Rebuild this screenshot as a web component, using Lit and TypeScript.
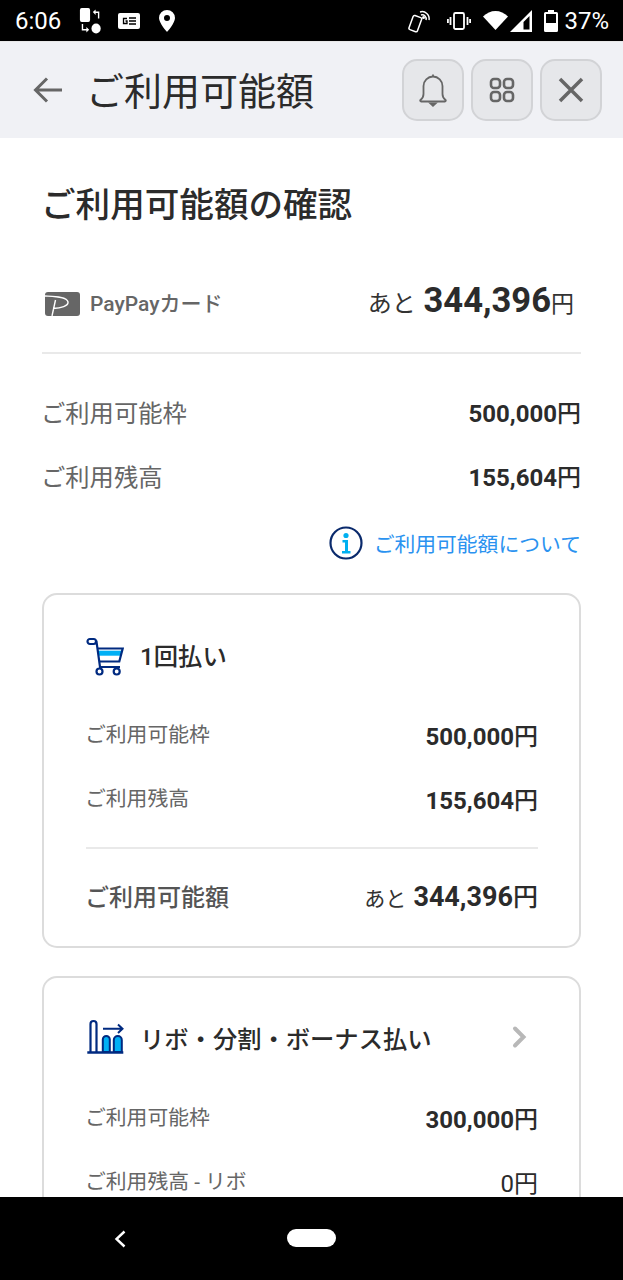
import { LitElement, html, css, svg } from 'lit';
import { customElement } from 'lit/decorators.js';

const row = (label: string, value: string) => html`
  <div class="card-row">
    <span class="card-label">${label}</span>
    <span class="card-value">${value}<span class="yen">円</span></span>
  </div>
`;

const cartIcon = svg`
  <svg class="card-icon cart" width="38" height="40" viewBox="0 0 38 40" fill="none">
    <rect x="12" y="13.700" width="24" height="5" fill="#00b0f5"/>
    <rect x="1.500" y="2" width="8.500" height="5" rx="2.400" stroke="#002a80" stroke-width="2.200"/>
    <path d="M10 4.500h.500L14 30h20" stroke="#002a80" stroke-width="2.200"/>
    <path d="M11.700 11.500h25l-3.400 13H13.500" stroke="#002a80" stroke-width="2.200"/>
    <circle cx="13.500" cy="34.500" r="3" fill="#fff" stroke="#002a80" stroke-width="2.200"/>
    <circle cx="30.700" cy="34.500" r="3" fill="#fff" stroke="#002a80" stroke-width="2.200"/>
  </svg>
`;

const chartIcon = svg`
  <svg class="card-icon" width="38" height="36" viewBox="0 0 38 36" fill="none">
    <path d="M16.800 33V20.500a3.500 3.500 0 0 1 7 0V33zM27.800 33V21a4 4 0 0 1 8 0V33z" fill="#00b0f5" stroke="#002a80" stroke-width="2"/>
    <path d="M4.500 33V5a3 3 0 0 1 6 0V33" stroke="#002a80" stroke-width="2.200"/>
    <path d="M1.300 33.500h36" stroke="#002a80" stroke-width="2.400"/>
    <path d="M17 9.700h19M32 5.500l4.500 4.200-4.500 4.300" stroke="#002a80" stroke-width="2"/>
  </svg>
`;

@customElement('app-root')
export class AppRoot extends LitElement {
  static styles = css`
    :host {
      display: flex;
      flex-direction: column;
      width: 623px;
      height: 1280px;
      overflow: hidden;
      background: #fff;
      font-family: Roboto, 'Noto Sans CJK JP', sans-serif;
      color: #2b2b2b;
    }

    .status {
      flex: none;
      height: 41px;
      background: #000;
      color: #fff;
      border-bottom: 1px solid #e8e8e8;
      display: flex;
      align-items: center;
      padding: 0 14px 0 15px;
      font-size: 24px;
      box-sizing: content-box;
    }
    .status-time { margin-right: 18px; }
    .status-left { display: flex; align-items: center; gap: 15px; }
    .pin { margin-left: 4px; }
    .status-right { margin-left: auto; display: flex; align-items: center; }
    .nfc { margin-right: 15px; }
    .vibrate { margin-right: 12px; }
    .signal { margin: 0 12px 0 2px; }
    .battery { margin-right: 6px; }

    .topbar {
      flex: none;
      height: 96px;
      background: #f0f1f5;
      display: flex;
      align-items: center;
      padding: 0 21px 0 33px;
    }
    .back { margin-right: 23px; display: block; }
    .topbar h1 {
      margin: -3px 0 0;
      font-size: 38px;
      font-weight: 400;
      color: #2b2b2b;
      flex: 1;
      white-space: nowrap;
    }
    .tool {
      width: 62px;
      height: 62px;
      box-sizing: border-box;
      border: 2px solid #d2d3d6;
      border-radius: 15px;
      background: #e6e7ea;
      margin-left: 7px;
      display: flex;
      align-items: center;
      justify-content: center;
    }

    .content {
      flex: 1;
      min-height: 0;
      overflow: hidden;
      padding: 0 42px;
    }
    h2 {
      margin: 42px 0 0 -1px;
      font-size: 34.6px;
      line-height: 50px;
      font-weight: 500;
      color: #2b2b2b;
      white-space: nowrap;
    }
    .summary {
      margin-top: 48px;
      height: 74px;
      display: flex;
      align-items: flex-start;
      border-bottom: 2px solid #e9e9e9;
    }
    .brand {
      display: flex;
      align-items: center;
      gap: 10px;
      margin: 11px 0 0 3px;
      font-size: 21px;
      line-height: 30px;
      font-weight: 500;
      color: #666;
    }
    .remain {
      margin-left: auto;
      margin-right: 7px;
      font-size: 23px;
      line-height: 36px;
      white-space: nowrap;
      color: #333;
      margin-top: 4px;
    }
    .remain .ato { font-size: 24px; }
    .remain b { font-size: 34.6px; font-weight: 700; color: #2b2b2b; margin: 0 0 0 2px; }

    .line {
      display: flex;
      justify-content: space-between;
      align-items: center;
      height: 64px;
    }
    .lines { margin-top: 25px; }
    .line-label { font-size: 24.3px; color: #666; margin-left: -1px; }
    .line-value { font-size: 24px; font-weight: 700; color: #2b2b2b; }
    .yen { font-weight: 500; }

    .about {
      display: flex;
      justify-content: flex-end;
      align-items: center;
      gap: 11px;
      margin-top: 16px;
      height: 40px;
      font-size: 20.8px;
      color: #2a92f0;
    }

    .card {
      box-sizing: border-box;
      margin-top: 30px;
      border: 2px solid #dcdcdc;
      border-radius: 15px;
      padding: 0 41px 0 42px;
      width: 539px;
    }
    .card-1 { height: 355px; }
    .card-2 { margin-top: 28px; height: 300px; }
    .card-head {
      display: flex;
      align-items: center;
      height: 44px;
      margin-top: 37px;
      gap: 16px;
      font-size: 24.3px;
      font-weight: 500;
      color: #2b2b2b;
      white-space: nowrap;
    }
    .card-icon { flex: none; display: block; }
    .cart { margin-top: 5px; }
    .chev { margin-left: auto; margin-right: 11px; display: block; }
    .card-rows { margin-top: 26px; }
    .card-row {
      display: flex;
      justify-content: space-between;
      align-items: center;
      height: 64px;
    }
    .card-label { font-size: 20.8px; color: #666; margin: -2px 0 0 -1px; }
    .card-value { font-size: 24px; font-weight: 700; color: #2b2b2b; }
    .card-value.plain { font-weight: 400; }
    .card-total {
      margin-top: 17px;
      padding-top: 13px;
      border-top: 2px solid #e9e9e9;
      display: flex;
      justify-content: space-between;
      align-items: center;
      height: 66px;
      box-sizing: content-box;
    }
    .total-label { font-size: 24px; font-weight: 500; color: #555; margin-left: -1px; }
    .total-value { font-size: 21px; color: #333; white-space: nowrap; }
    .total-value b { font-size: 27px; font-weight: 700; color: #2b2b2b; margin-left: 2px; }
    .total-value b.yen { font-size: 25px; font-weight: 500; margin-left: 0; }

    .navbar {
      flex: none;
      height: 83px;
      background: #000;
      position: relative;
      display: flex;
      align-items: center;
      justify-content: center;
    }
    .nav-back { position: absolute; left: 113px; top: 33px; }
    .pill {
      width: 49px;
      height: 18px;
      border-radius: 9px;
      background: #fff;
      margin-top: -1px;
    }
  `;

  render() {
    return html`
      <div class="status">
        <span class="status-time">6:06</span>
        <div class="status-left">
          <svg width="24" height="26" viewBox="0 0 26 26" preserveAspectRatio="none" fill="#fff">
            <rect x="1" y="0" width="11" height="14" rx="2"/>
            <circle cx="18.5" cy="20.5" r="5"/>
            <path d="M15 4l3-2.500v2h4v7h-1.500V5h-2.500v2zM3 16h1.500v5H8v-2l3 2.800-3 2.700v-2H3z"/>
          </svg>
          <svg width="22" height="16" viewBox="0 0 22 16">
            <rect width="22" height="16" rx="2" fill="#fff"/>
            <path d="M9 5.500H5.500v5H9V8H7.500" fill="none" stroke="#000" stroke-width="1.300"/>
            <path d="M11 5h7M11 8h7M11 11h7" stroke="#000" stroke-width="1.400"/>
          </svg>
          <svg class="pin" width="16" height="22" viewBox="0 0 16 22">
            <path fill-rule="evenodd" fill="#fff" d="M8 0a8 8 0 0 1 8 8c0 5-8 14-8 14S0 13 0 8a8 8 0 0 1 8-8zm0 5a3 3 0 1 0 0 6 3 3 0 0 0 0-6z"/>
          </svg>
        </div>
        <div class="status-right">
          <svg class="nfc" width="24" height="24" viewBox="0 0 24 24" fill="none" stroke="#fff" stroke-width="1.500">
            <rect x="3" y="7" width="9" height="15" rx="1.500" transform="rotate(20 7 14)"/>
            <path d="M12 3a7 7 0 0 1 9 8M13 6a4 4 0 0 1 5 5"/>
            <circle cx="15.500" cy="8.500" r="1.500" fill="#fff" stroke="none"/>
          </svg>
          <svg class="vibrate" width="24" height="20" viewBox="0 0 24 20" fill="none" stroke="#fff" stroke-width="1.800">
            <rect x="7" y="2" width="10" height="16" rx="1.500"/>
            <path d="M3.500 6v8M0.900 8v4M20.500 6v8M23.100 8v4"/>
          </svg>
          <svg width="25" height="19" viewBox="0 0 25 19" fill="#fff">
            <path d="M0 5.500C3.500 2 8 0 12.500 0S21.500 2 25 5.500L12.500 19z"/>
          </svg>
          <svg class="signal" width="22" height="22" viewBox="0 0 22 22">
            <path d="M0 22 22 0v22zM19.500 19.500V6L13.500 12V19.500z" fill="#fff" fill-rule="evenodd"/>
          </svg>
          <svg class="battery" width="14" height="22" viewBox="0 0 14 22">
            <path fill="#fff" fill-rule="evenodd" d="M4 0h6v2h2.500A1.500 1.500 0 0 1 14 3.500v17a1.500 1.500 0 0 1-1.500 1.500h-11A1.500 1.500 0 0 1 0 20.500v-17A1.500 1.500 0 0 1 1.500 2H4zM2 4v9h10V4z"/>
          </svg>
          <span>37%</span>
        </div>
      </div>

      <div class="topbar">
        <svg class="back" width="30" height="30" viewBox="0 0 30 30" fill="none" stroke="#666" stroke-width="3">
          <path d="M29 15H3M14 3.500 2.500 15 14 26.500"/>
        </svg>
        <h1>ご利用可能額</h1>
        <div class="tool">
          <svg width="28" height="34" viewBox="0 0 28 34" fill="none" stroke="#666" stroke-width="1.800">
            <path d="M1.500 27c2-1.500 3-3 3-6v-8a9.500 9.500 0 0 1 19 0v8c0 3 1 4.500 3 6 .6.600.2 1.500-.6 1.500H2.100c-.8 0-1.200-.9-.6-1.500z"/>
            <path d="M11.500 30.500h5l-2.500 2.200z" fill="#666"/>
            <path d="M14 1.500v2"/>
          </svg>
        </div>
        <div class="tool">
          <svg width="26" height="26" viewBox="0 0 26 26" fill="none" stroke="#666" stroke-width="2.600">
            <rect x="2" y="2" width="9" height="9" rx="3"/>
            <rect x="15" y="2" width="9" height="9" rx="3"/>
            <rect x="2" y="15" width="9" height="9" rx="3"/>
            <rect x="15" y="15" width="9" height="9" rx="3"/>
          </svg>
        </div>
        <div class="tool">
          <svg width="26" height="26" viewBox="0 0 26 26" fill="none" stroke="#666" stroke-width="3.500">
            <path d="M2 2l22 22M24 2 2 24"/>
          </svg>
        </div>
      </div>

      <div class="content">
        <h2>ご利用可能額の確認</h2>

        <div class="summary">
          <div class="brand">
            <svg width="35" height="24" viewBox="0 0 35 24">
              <rect width="35" height="24" rx="3" fill="#666"/>
              <path d="M0 4C9 4.500 22 4.500 23 10C23.500 14 16 16 8 16.500M10.500 8 7 24" fill="none" stroke="#fff" stroke-width="1.400"/>
            </svg>
            <span>PayPayカード</span>
          </div>
          <div class="remain"><span class="ato">あと</span> <b>344,396</b>円</div>
        </div>

        <div class="lines">
          <div class="line">
            <span class="line-label">ご利用可能枠</span>
            <span class="line-value">500,000<span class="yen">円</span></span>
          </div>
          <div class="line">
            <span class="line-label">ご利用残高</span>
            <span class="line-value">155,604<span class="yen">円</span></span>
          </div>
        </div>

        <div class="about">
          <svg width="34" height="34" viewBox="0 0 34 34" fill="none">
            <circle cx="17" cy="17" r="15.500" stroke="#0a2a6c" stroke-width="2.200"/>
            <circle cx="17" cy="9.500" r="2.600" fill="#00b0f0"/>
            <path d="M13.500 14h5.500v11h2.500v2.500h-8.500V25H16v-8.500h-2.500z" fill="#00b0f0"/>
          </svg>
          <span>ご利用可能額について</span>
        </div>

        <div class="card card-1">
          <div class="card-head">${cartIcon}<span>1回払い</span></div>
          <div class="card-rows">
            ${row('ご利用可能枠', '500,000')}
            ${row('ご利用残高', '155,604')}
          </div>
          <div class="card-total">
            <span class="total-label">ご利用可能額</span>
            <span class="total-value">あと <b>344,396</b><b class="yen">円</b></span>
          </div>
        </div>

        <div class="card card-2">
          <div class="card-head">
            ${chartIcon}
            <span>リボ・分割・ボーナス払い</span>
            <svg class="chev" width="16" height="24" viewBox="0 0 16 24" fill="none" stroke="#b8b8b8" stroke-width="4" stroke-linecap="round">
              <path d="M4 3.500l8.500 8.500L4 20.500"/>
            </svg>
          </div>
          <div class="card-rows">
            ${row('ご利用可能枠', '300,000')}
            <div class="card-row">
              <span class="card-label">ご利用残高 - リボ</span>
              <span class="card-value plain">0円</span>
            </div>
          </div>
        </div>
      </div>

      <div class="navbar">
        <svg class="nav-back" width="14" height="18" viewBox="0 0 14 18" fill="none" stroke="#fff" stroke-width="2.400">
          <path d="M11.500 1.500 3.500 9l8 7.500"/>
        </svg>
        <div class="pill"></div>
      </div>
    `;
  }
}

declare global {
  interface HTMLElementTagNameMap {
    'app-root': AppRoot;
  }
}
